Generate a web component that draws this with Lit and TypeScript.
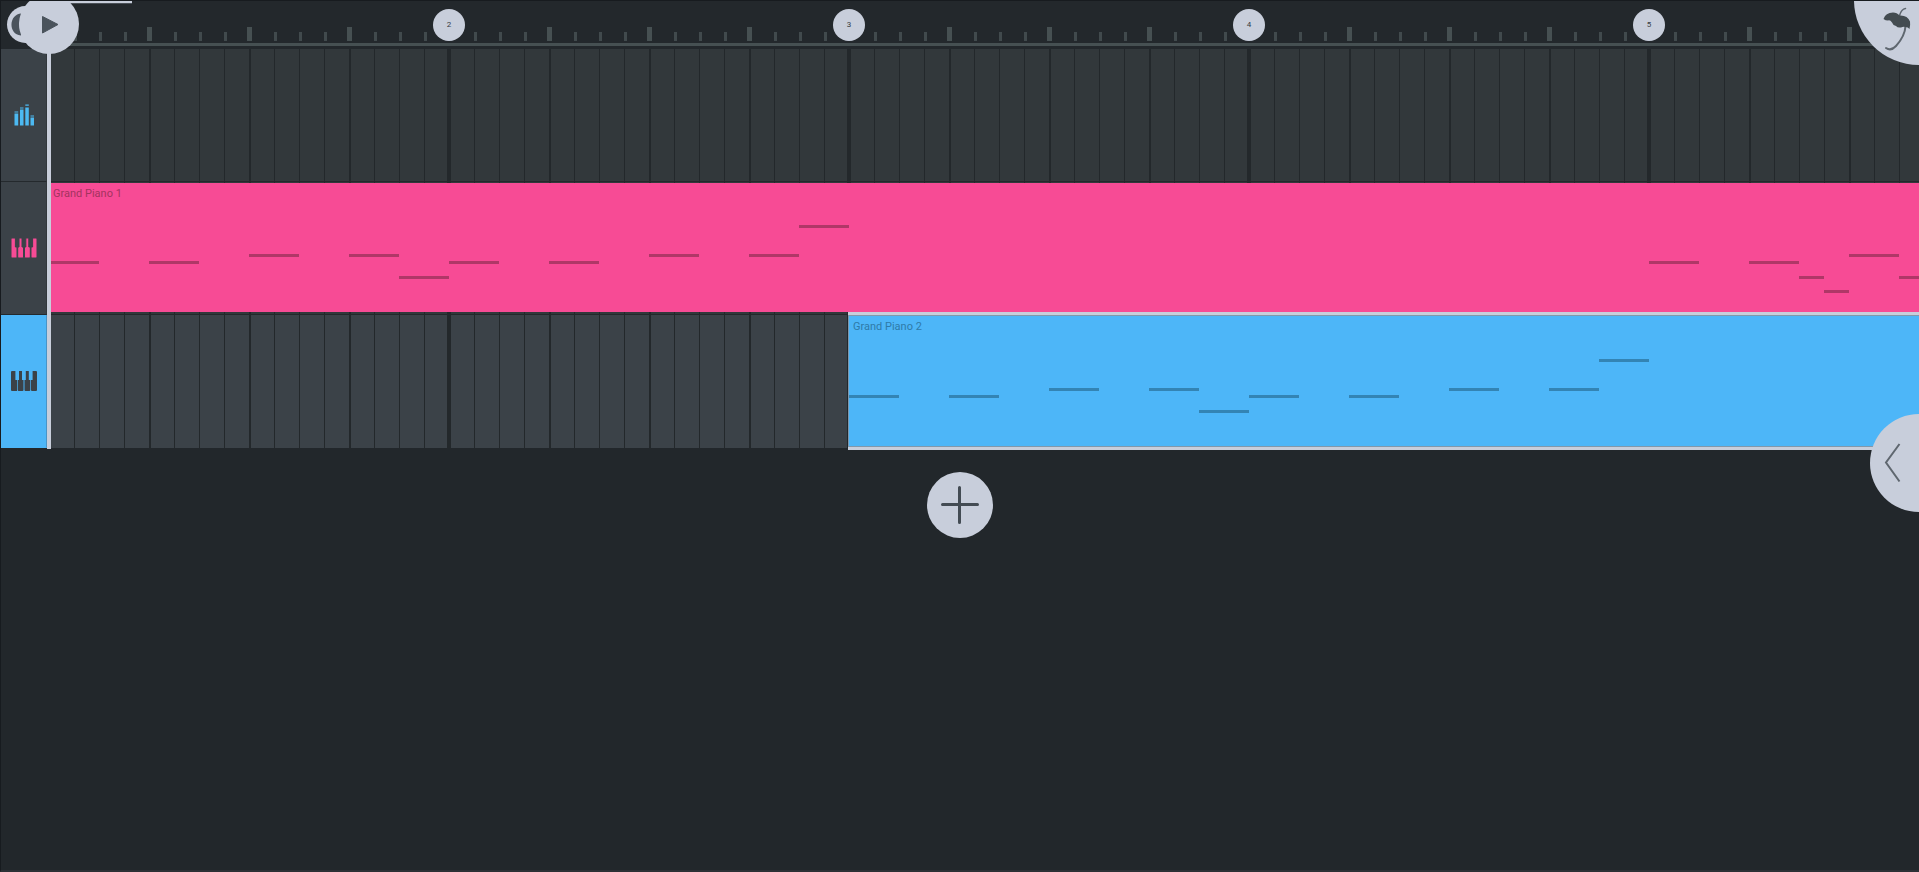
import { LitElement, html, css, svg } from "lit";
import { customElement, property } from "lit/decorators.js";
import { classMap } from "lit/directives/class-map.js";
import { styleMap } from "lit/directives/style-map.js";

interface Note {
  start: number;
  length: number;
  row: number;
}

interface Clip {
  name: string;
  start: number;
  notes: Note[];
  selected?: boolean;
}

interface Track {
  label: string;
  icon: "mixer" | "keys";
  selected?: boolean;
  clip?: Clip;
}

/** Horizontal scale of the timeline: one sixteenth of a bar. */
const STEP = 25;

const melody: [number, number, number][] = [
  [0, 2, 78], [4, 2, 78], [8, 2, 71], [12, 2, 71], [14, 2, 93],
  [16, 2, 78], [20, 2, 78], [24, 2, 71], [28, 2, 71], [30, 2, 42],
];
const reprise: [number, number, number][] = [
  [64, 2, 78], [68, 2, 78], [70, 1, 93], [71, 1, 107], [72, 2, 71], [74, 2, 93],
];
const toNotes = (list: [number, number, number][]): Note[] =>
  list.map(([start, length, row]) => ({ start, length, row }));

const tracks: Track[] = [
  { label: "Drums", icon: "mixer" },
  {
    label: "Grand Piano 1", icon: "keys",
    clip: { name: "Grand Piano 1", start: 0, notes: toNotes([...melody, ...reprise]) },
  },
  {
    label: "Grand Piano 2", icon: "keys", selected: true,
    clip: { name: "Grand Piano 2", start: 32, notes: toNotes(melody), selected: true },
  },
];

const mixerIcon = html`<svg width="20" height="22" viewBox="0 0 20 22" aria-hidden="true">
  <g fill="#4cb9f2">
    <path d="M.5 9.500h3.700v12H.5zM6 5.500h3.500v16H6zM11.300 3.500h3.500v18h-3.500zM16.500 13.500h3.500v8h-3.500z" />
    <path d="M.5 7.500h3.700v1H.5zM6 3.500h3.500v1H6zM11.300.500h3.500v1.200h-3.500zM16.500 11.500h3.500v1h-3.500z" />
  </g>
</svg>`;

const keysIcon = html`<svg width="26" height="20" viewBox="0 0 26 20" aria-hidden="true">
  <g fill="currentColor">
    <path d="M1 0h3.400v9H6v11H1Q0 20 0 19V1Q0 0 1 0z" />
    <path d="M8 0h3v9h1.500v10q0 1-1 1H7.700q-1 0-1-1V9H8z" />
    <path d="M14.800 0h3v9h1.500v10q0 1-1 1h-3.800q-1 0-1-1V9h1.300z" />
    <path d="M21.600 0H25q1 0 1 1v18q0 1-1 1h-4q-1 0-1-1V9h1.600z" />
  </g>
</svg>`;

@customElement("track-row")
class TrackRow extends LitElement {
  @property({ attribute: false }) track!: Track;

  static styles = css`
    :host { display: block; }
    .row { display: grid; grid-template-columns: 46px 1fr; height: 133px; }
    .head {
      appearance: none; margin: 0; padding: 0; border: 0;
      border-right: 1px solid #32383c; border-bottom: 1px solid #24292d;
      background: #3b4248; color: #f74b95;
      display: flex; align-items: center; justify-content: center;
      cursor: pointer;
    }
    .head.keys path { stroke: #3b4248; stroke-width: 1px; }
    .head.selected { background: #4db6f8; color: #3b4248; border-right-color: #4a94c6; border-bottom-color: #4db6f8; }
    .head.selected path { stroke: none; }
    .lane {
      --line: #23282b;
      position: relative;
      border-bottom: 1px solid #23282b;
      background-color: #32383b;
      background-image:
        linear-gradient(90deg, var(--line) 4px, transparent 4px),
        linear-gradient(90deg, var(--line) 2px, transparent 2px),
        linear-gradient(90deg, var(--line) 1px, transparent 1px);
      background-size: 400px 100%, 100px 100%, 25px 100%;
      background-position: 0 0, 2px 0, 2px 0;
    }
    .lane.selected { background-color: #3b4248; border-bottom: 0; }
    .clip {
      position: absolute; top: 1px; right: 0; bottom: 2px;
      overflow: hidden; background: #f74b95; --ink: #a2345f;
      font: 11px/14px Roboto, sans-serif;
    }
    .clip.selected {
      top: -3px; bottom: -2px; background: #4db6f8; --ink: #2f7ba8;
      border-top: 3px solid #c8cedb; border-bottom: 3px solid #c8cedb;
      box-shadow: inset 1px 0 #8298ab, inset 0 1px #8298ab, inset 0 -1px #8298ab;
    }
    .name { padding: 4px 5px; color: var(--ink); white-space: nowrap; }
    .roll { position: absolute; inset: 0; }
    .selected .name { padding-top: 5px; }
    .selected .roll { top: 2px; }
    .note { position: absolute; height: 3px; background: var(--ink); opacity: 0.85; }
  `;

  render() {
    const { label, icon, selected, clip } = this.track;
    return html`<div class="row">
      <button class=${classMap({ head: true, keys: icon === "keys", selected: !!selected })} aria-label=${label}>
        ${icon === "mixer" ? mixerIcon : keysIcon}
      </button>
      <div class=${classMap({ lane: true, selected: !!selected })}>
        ${clip ? this.renderClip(clip) : null}
      </div>
    </div>`;
  }

  private renderClip(clip: Clip) {
    return html`<div
      class=${classMap({ clip: true, selected: !!clip.selected })}
      style=${styleMap({ left: `${clip.start * STEP + 1}px` })}
    >
      <div class="name">${clip.name}</div>
      <div class="roll">
        ${clip.notes.map((n) => html`<div class="note" style=${styleMap({
          left: `${n.start * STEP + 1}px`,
          width: `${n.length * STEP}px`,
          top: `${n.row}px`,
        })}></div>`)}
      </div>
    </div>`;
  }
}

@customElement("time-ruler")
class TimeRuler extends LitElement {
  static styles = css`
    :host { display: block; }
    .ruler {
      display: flex; height: 48px; padding-left: 48px; box-sizing: border-box; overflow: hidden;
      background: #23282c;
      font: 8px/32px Roboto, sans-serif;
    }
    .bar {
      flex: none; position: relative; width: 400px; height: 45px; box-sizing: border-box;
      border-bottom: 3px solid #465052;
    }
    .ticks { display: block; overflow: visible; }
    .marker {
      position: absolute; left: -16px; top: 8px; width: 32px; height: 32px;
      border-radius: 50%; background: #c8cedb; color: #343b42; text-align: center;
    }
  `;

  render() {
    const steps = Array.from({ length: 16 }, (_, i) => i);
    return html`<div class="ruler">
      ${[1, 2, 3, 4, 5].map((bar) => html`<div class="bar">
        <svg class="ticks" width="400" height="42" aria-hidden="true">
          ${steps.map((i) => i % 4 === 0
            ? svg`<rect x=${i * STEP - 2} y="26" width="5" height="14" fill="#465052" />`
            : svg`<rect x=${i * STEP} y="31" width="3" height="9" fill="#414a4d" />`)}
        </svg>
        ${bar > 1 ? html`<span class="marker">${bar}</span>` : null}
      </div>`)}
    </div>`;
  }
}

@customElement("app-root")
class AppRoot extends LitElement {
  static styles = css`
    :host { display: block; }
    .app {
      position: relative; min-height: 100vh; box-sizing: border-box; overflow: hidden;
      border-top: 1px solid #171b1f; border-left: 1px solid #171b1f; border-bottom: 2px solid #2c3136;
      background: #22272b;
    }
    .arrangement { position: relative; }
    .playhead {
      position: absolute; left: 46px; top: 24px; bottom: -1px; width: 4px; background: #c8cedb;
    }
    .progress { position: absolute; left: 48px; top: 0; width: 83px; height: 3px; background: #c8cedb; border-bottom: 1px solid #4a5057; box-sizing: border-box; }
    button { appearance: none; margin: 0; padding: 0; border: 0; border-radius: 50%; background: #c8cedb; cursor: pointer; }
    button svg { display: block; }
    .record { position: absolute; left: 6px; top: 5px; width: 37px; height: 37px; }
    .play { position: absolute; left: 18px; top: -7px; width: 60px; height: 60px; }
    .umbrella { position: absolute; right: -65px; top: -66px; width: 130px; height: 130px; }
    .umbrella svg { margin-top: 66px; }
    .panel { position: absolute; right: -49px; top: 413px; width: 98px; height: 98px; }
    .add-area { display: flex; justify-content: center; padding-top: 24px; }
    .add { width: 66px; height: 66px; }
  `;

  render() {
    return html`<main class="app">
      <div class="arrangement">
        <time-ruler></time-ruler>
        ${tracks.map((track) => html`<track-row .track=${track}></track-row>`)}
        <div class="playhead"></div>
      </div>
      <div class="add-area">
        <button class="add" aria-label="Add track">
          <svg width="66" height="66" viewBox="0 0 66 66">
            <path d="M32.500 15.500v35M15.500 32.500h35" fill="none" stroke="#434b53" stroke-width="3" stroke-linecap="round" />
          </svg>
        </button>
      </div>
      <div class="progress"></div>
      <button class="record" aria-label="Record">
        <svg width="37" height="37" viewBox="0 0 37 37">
          <path d="M14.500 7.500C1.500 8 1 28.500 14 29.500L14 25.500Q10 18.500 14.500 10.500z" fill="#4a535c" />
        </svg>
      </button>
      <button class="play" aria-label="Play">
        <svg width="60" height="60" viewBox="0 0 60 60">
          <path d="M23.500 22.500L39 30.500L23.500 39z" fill="#4a535c" stroke="#4a535c" stroke-linejoin="round" />
        </svg>
      </button>
      <button class="umbrella" aria-label="Menu">
        <svg width="65" height="64" viewBox="0 0 65 64">
          <g transform="translate(0 -1)">
            <path d="M51.500 8.500Q47.500 9 45.500 15.500" fill="none" stroke="#5f676f" stroke-width="1.500" stroke-linecap="round" />
            <path d="M51.500 26Q51 36 42 46Q37 51.500 32 48" fill="none" stroke="#5f676f" stroke-width="2" stroke-linecap="round" />
            <path d="M29.500 19Q31.500 12.500 39 12.500Q43 12.500 45.500 15.500Q53.500 15 56 21.500Q56.500 25 55.500 29Q54 27 51.500 27Q49 26.500 47 27.500Q43.500 28 42 26Q39 25.500 38 22.500Q36 19.500 34 20.500Q31.500 20.500 29.500 19z" fill="#434b50" />
          </g>
        </svg>
      </button>
      <button class="panel" aria-label="Open panel">
        <svg width="49" height="98" viewBox="0 0 49 98">
          <path d="M29.500 30L16 48.500L29.500 67.500" fill="none" stroke="#5f676f" stroke-width="2" />
        </svg>
      </button>
    </main>`;
  }
}
